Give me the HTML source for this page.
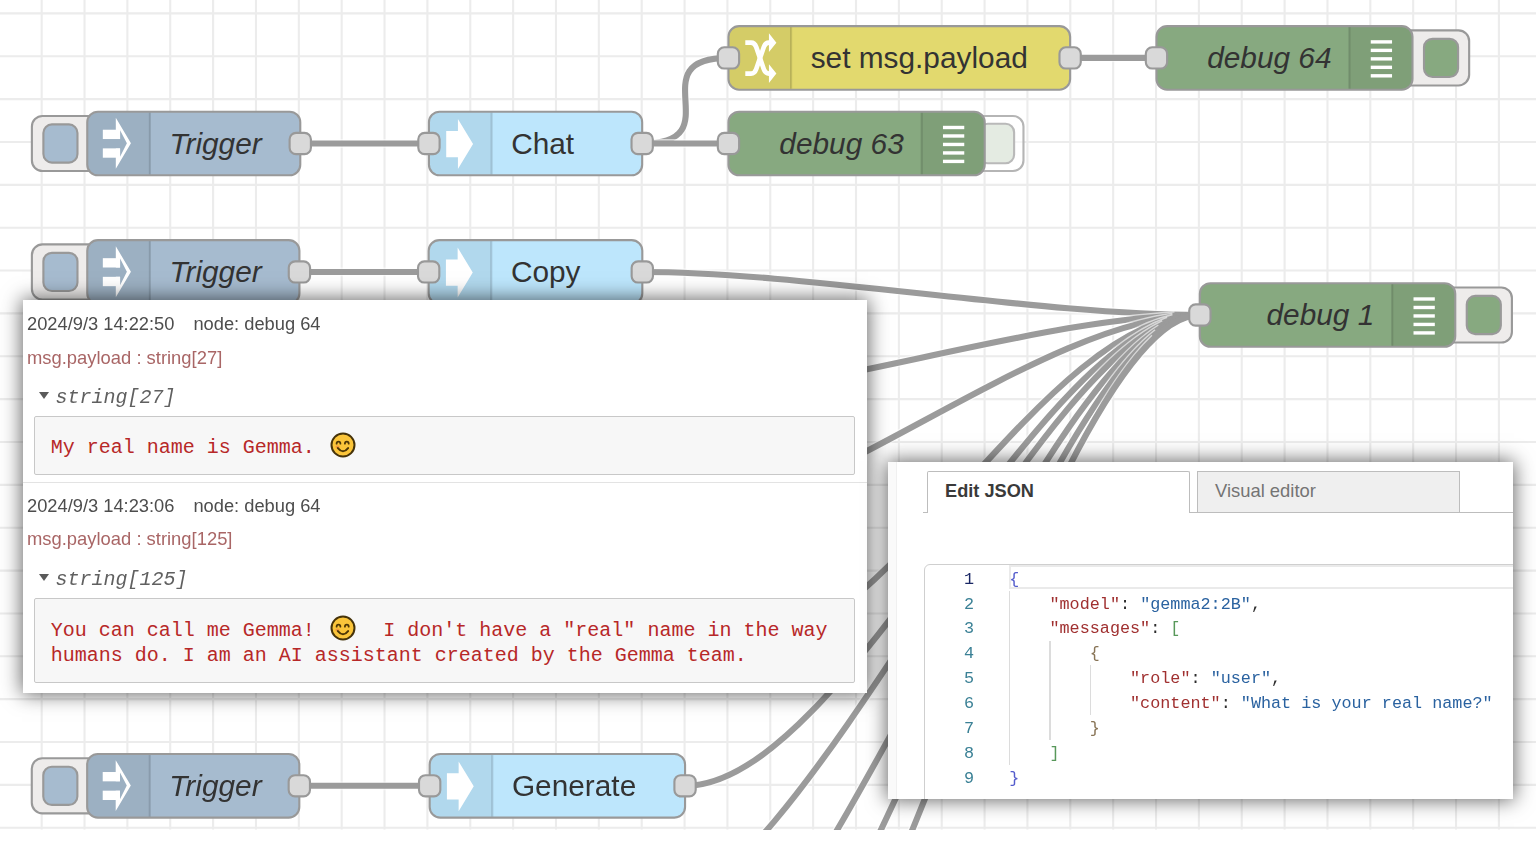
<!DOCTYPE html>
<html lang="en"><head><meta charset="utf-8"><title>Node-RED flow</title>
<style>
html,body{margin:0;padding:0;background:#fff}
body{width:1536px;height:864px;overflow:hidden;position:relative;font-family:"Liberation Sans",Arial,Helvetica,sans-serif}
.lo{stroke:#fff;stroke-width:8.8;stroke-opacity:.6;stroke-dasharray:95.5 4.5;stroke-linecap:butt}.ll{stroke:#9b9b9b;stroke-width:6.1}
.ws{position:absolute;left:0;top:0;display:block;filter:blur(.7px)}
.p1,.p2{filter:blur(.45px)}
.p1{position:absolute;left:23px;top:300px;width:844px;height:393px;background:#fff;box-shadow:0 0 19px 1px rgba(0,0,0,.62);overflow:hidden}
.m{position:absolute;left:0;width:100%;height:181px}
.meta{position:absolute;left:4px;top:13.1px;font-size:18.3px;line-height:22px;color:#4d4d4d;white-space:nowrap}
.nm{position:absolute;left:166.4px;top:0}
.tp{position:absolute;left:4px;top:46.5px;font-size:18.4px;line-height:22px;color:#a96666;white-space:nowrap}
.ty{position:absolute;left:32.6px;top:85.3px;font:italic 20px/26px "Liberation Mono","DejaVu Sans Mono",monospace;color:#606060;white-space:nowrap}
.tri{position:absolute;left:-16.6px;top:7.2px;width:0;height:0;border-left:5.7px solid transparent;border-right:5.7px solid transparent;border-top:7px solid #5a5a5a}
.box{position:absolute;left:10.5px;top:116px;width:821.2px;box-sizing:border-box;border:1.5px solid #c8c8c8;border-radius:2px;background:#f7f7f7;padding:19.2px 0 11.8px 16.2px;font:20px/25px "Liberation Mono","DejaVu Sans Mono",monospace;color:#b72828;white-space:pre}
.emo{display:inline-block;width:32.6px;height:10px;position:relative;vertical-align:baseline}
.emo svg{position:absolute;left:3.7px;top:-11.2px}
.sep{position:absolute;left:0;width:100%;height:1.5px;background:#e3e3e3}
.p2{position:absolute;left:888.4px;top:461.5px;width:624.7px;height:337px;background:#fff;box-shadow:0 0 19px 1px rgba(0,0,0,.62);overflow:hidden}
.edge{position:absolute;left:0;top:0;width:7.6px;height:100%;background:#fafafa;border-right:1.2px solid #f0f0f0}
.tabbar{position:absolute;left:35px;top:50px;width:600px;height:1.5px;background:#bdbdbd}
.tab{position:absolute;box-sizing:border-box;border:1.5px solid #bdbdbd;font-size:17.6px;line-height:38px;white-space:nowrap}
.t1{left:38.3px;top:9.8px;width:263.6px;height:41.7px;border-bottom:0;background:#fff;color:#3a3a3a;font-weight:bold;font-size:18.2px;padding-left:17.4px;border-radius:2px 2px 0 0}
.t2{left:309px;top:9.5px;width:262.5px;height:42px;background:#efefef;color:#747474;padding-left:16.6px;font-size:18.4px}
.ed{position:absolute;left:35.4px;top:102px;width:620px;height:260px;box-sizing:border-box;border:1.5px solid #cfcfcf;border-radius:6px 0 0 0;font:16.8px/24.85px "Liberation Mono","DejaVu Sans Mono",monospace;color:#2c2c2c;white-space:pre}
.cur{position:absolute;left:83.8px;top:0.6px;width:560px;height:24px;box-sizing:border-box;border:2px solid #eaeaea}
.ig{position:absolute;width:1.2px;background:#dcdcdc}
.ln{position:relative;height:24.85px}
.no{position:absolute;left:0;top:3.3px;width:49.3px;text-align:right;color:#3a8095}
.no.act{color:#1a2764}
.cd{position:absolute;left:84.4px;top:3.3px}
.k{color:#a03030}.s{color:#2a62a0}.b1{color:#545ccc}.b2{color:#58985a}.b3{color:#887456}
</style></head>
<body>
<svg class="ws" width="1536" height="829.5" viewBox="0 0 1536 829.5"><rect width="1536" height="829.5" fill="#fff"/><path d="M41.66 0V829.5M84.52 0V829.5M127.38 0V829.5M170.24 0V829.5M213.1 0V829.5M255.96 0V829.5M298.82 0V829.5M341.68 0V829.5M384.54 0V829.5M427.4 0V829.5M470.26 0V829.5M513.12 0V829.5M555.98 0V829.5M598.84 0V829.5M641.7 0V829.5M684.56 0V829.5M727.42 0V829.5M770.28 0V829.5M813.14 0V829.5M856 0V829.5M898.86 0V829.5M941.72 0V829.5M984.58 0V829.5M1027.44 0V829.5M1070.3 0V829.5M1113.16 0V829.5M1156.02 0V829.5M1198.88 0V829.5M1241.74 0V829.5M1284.6 0V829.5M1327.46 0V829.5M1370.32 0V829.5M1413.18 0V829.5M1456.04 0V829.5M1498.9 0V829.5M0 13.4H1536M0 56.26H1536M0 99.12H1536M0 141.98H1536M0 184.84H1536M0 227.7H1536M0 270.56H1536M0 313.42H1536M0 356.28H1536M0 399.14H1536M0 442H1536M0 484.86H1536M0 527.72H1536M0 570.58H1536M0 613.44H1536M0 656.3H1536M0 699.16H1536M0 742.02H1536M0 784.88H1536M0 827.74H1536" stroke="#ececec" stroke-width="2.1" fill="none"/><g fill="none" stroke-linecap="round"><path class="lo" pathLength="100" d="M300 143.5 C396.75 143.5 332.25 143.5 429 143.5"/><path class="ll" d="M300 143.5 C396.75 143.5 332.25 143.5 429 143.5"/><path class="lo" pathLength="100" d="M642.5 143.5 C733.45 143.5 637.45 57.9 728.4 57.9"/><path class="ll" d="M642.5 143.5 C733.45 143.5 637.45 57.9 728.4 57.9"/><path class="lo" pathLength="100" d="M642.5 143.5 C706.92 143.5 663.98 143.5 728.4 143.5"/><path class="ll" d="M642.5 143.5 C706.92 143.5 663.98 143.5 728.4 143.5"/><path class="lo" pathLength="100" d="M1070.5 57.9 C1135 57.9 1092 57.9 1156.5 57.9"/><path class="ll" d="M1070.5 57.9 C1135 57.9 1092 57.9 1156.5 57.9"/><path class="lo" pathLength="100" d="M300 271.96 C396.75 271.96 332.25 271.96 429 271.96"/><path class="ll" d="M300 271.96 C396.75 271.96 332.25 271.96 429 271.96"/><path class="lo" pathLength="100" d="M642.5 271.96 C802.25 271.96 1040.15 315 1199.9 315"/><path class="ll" d="M642.5 271.96 C802.25 271.96 1040.15 315 1199.9 315"/><path class="lo" pathLength="100" d="M643 400.42 C802.75 400.42 1040.15 315 1199.9 315"/><path class="ll" d="M643 400.42 C802.75 400.42 1040.15 315 1199.9 315"/><path class="lo" pathLength="100" d="M643 528.88 C802.75 528.88 1040.15 315 1199.9 315"/><path class="ll" d="M643 528.88 C802.75 528.88 1040.15 315 1199.9 315"/><path class="lo" pathLength="100" d="M728 657.34 C887.75 657.34 1040.15 315 1199.9 315"/><path class="ll" d="M728 657.34 C887.75 657.34 1040.15 315 1199.9 315"/><path class="lo" pathLength="100" d="M300 785.8 C397.12 785.8 332.38 785.8 429.5 785.8"/><path class="ll" d="M300 785.8 C397.12 785.8 332.38 785.8 429.5 785.8"/><path class="lo" pathLength="100" d="M685.5 785.8 C845.25 785.8 1040.15 315 1199.9 315"/><path class="ll" d="M685.5 785.8 C845.25 785.8 1040.15 315 1199.9 315"/><path class="lo" pathLength="100" d="M643 914.26 C802.75 914.26 1040.15 315 1199.9 315"/><path class="ll" d="M643 914.26 C802.75 914.26 1040.15 315 1199.9 315"/><path class="lo" pathLength="100" d="M643 1042.72 C802.75 1042.72 1040.15 315 1199.9 315"/><path class="ll" d="M643 1042.72 C802.75 1042.72 1040.15 315 1199.9 315"/><path class="lo" pathLength="100" d="M643 1171.18 C802.75 1171.18 1040.15 315 1199.9 315"/><path class="ll" d="M643 1171.18 C802.75 1171.18 1040.15 315 1199.9 315"/><path class="lo" pathLength="100" d="M643 1299.64 C802.75 1299.64 1040.15 315 1199.9 315"/><path class="ll" d="M643 1299.64 C802.75 1299.64 1040.15 315 1199.9 315"/></g><g font-family="'Liberation Sans', Arial, Helvetica, sans-serif" fill="#333" stroke-width="1"><g transform="translate(87.27 111.7) scale(2.13 2.12)"><rect x="-26" y="2" width="32.6" height="26" rx="5" fill="#eeeceb" stroke="#999"/><rect x="-20.6" y="6" width="16" height="18" rx="4" fill="#a6bbcf" stroke="#999"/><rect x="0" y="0" width="100" height="30" rx="5" fill="#a6bbcf" stroke="#999"/><path d="M29.4 0.5 H5 a4.5 4.5 0 0 0 -4.5 4.5 V25 a4.5 4.5 0 0 0 4.5 4.5 H29.4 Z" fill="#000" fill-opacity="0.06"/><path d="M29.4 0.5 V29.5" stroke="#000" stroke-opacity="0.13" stroke-width="1"/><g transform="translate(-0.4 0)"><rect x="7.7" y="8.5" width="8.1" height="4.4" fill="#fff"/><rect x="7.7" y="17.3" width="8.1" height="4.4" fill="#fff"/><path fill="#fff" fill-rule="evenodd" d="M13.8 2.9 L20.9 14.9 L13.8 26.9 Z M13.8 12.9 H15.8 V8.7 L19 14.9 L15.8 21.3 V17.3 H13.8 Z"/></g><text x="38.6" y="19.9" font-size="14" font-style="italic">Trigger</text><rect x="95" y="10" width="10" height="10" rx="3" fill="#d9d9d9" stroke="#999"/></g><g transform="translate(428.96 111.7) scale(2.13 2.12)"><rect x="0" y="0" width="100.1" height="30" rx="5" fill="#bde6fc" stroke="#999"/><path d="M29.4 0.5 H5 a4.5 4.5 0 0 0 -4.5 4.5 V25 a4.5 4.5 0 0 0 4.5 4.5 H29.4 Z" fill="#000" fill-opacity="0.06"/><path d="M29.4 0.5 V29.5" stroke="#000" stroke-opacity="0.13" stroke-width="1"/><g transform="translate(-0.4 0)"><path fill="#fff" d="M8.5 9.1 H14 V3.5 L21.1 15.2 L14 27 V21.5 H8.5 Z"/></g><text x="38.6" y="19.9" font-size="14">Chat</text><rect x="-5" y="10" width="10" height="10" rx="3" fill="#d9d9d9" stroke="#999"/><rect x="95.1" y="10" width="10" height="10" rx="3" fill="#d9d9d9" stroke="#999"/></g><g transform="translate(728.47 26.1) scale(2.13 2.12)"><rect x="0" y="0" width="160.4" height="30" rx="5" fill="#e2d96e" stroke="#999"/><path d="M29.4 0.5 H5 a4.5 4.5 0 0 0 -4.5 4.5 V25 a4.5 4.5 0 0 0 4.5 4.5 H29.4 Z" fill="#000" fill-opacity="0.06"/><path d="M29.4 0.5 V29.5" stroke="#000" stroke-opacity="0.13" stroke-width="1"/><g transform="translate(-0.4 0)"><path fill="none" stroke="#fff" stroke-width="2.2" d="M8.3 7.8 H11 Q12.7 7.8 13.4 9.8 L17 20.4 Q17.7 22.4 19.4 22.4 H20"/><path fill="none" stroke="#fff" stroke-width="2.2" d="M8.3 22.4 H11 Q12.7 22.4 13.4 20.4 L17 9.8 Q17.7 7.8 19.4 7.8 H20"/><path fill="#fff" d="M19.4 3.4 L22.9 7.8 L19.4 12.2 Z M19.4 18 L22.9 22.4 L19.4 26.8 Z"/></g><text x="38.6" y="19.9" font-size="14">set msg.payload</text><rect x="-5" y="10" width="10" height="10" rx="3" fill="#d9d9d9" stroke="#999"/><rect x="155.4" y="10" width="10" height="10" rx="3" fill="#d9d9d9" stroke="#999"/></g><g transform="translate(728.47 111.7) scale(2.13 2.12)"><rect x="105.3" y="2" width="33.2" height="26" rx="5" fill="#fff" fill-opacity="0.55" stroke="#b5b5b5"/><rect x="117.7" y="5.7" width="16.4" height="18.6" rx="4" fill="#e4ebe2" stroke="#b9b9b9"/><rect x="0" y="0" width="120.3" height="30" rx="5" fill="#87a980" stroke="#999"/><path d="M90.7 0.5 H115.3 a4.5 4.5 0 0 1 4.5 4.5 V25 a4.5 4.5 0 0 1 -4.5 4.5 H90.7 Z" fill="#000" fill-opacity="0.06"/><path d="M90.7 0.5 V29.5" stroke="#000" stroke-opacity="0.13" stroke-width="1"/><rect x="100.7" y="6.65" width="10" height="1.6" fill="#fff"/><rect x="100.7" y="10.65" width="10" height="1.6" fill="#fff"/><rect x="100.7" y="14.65" width="10" height="1.6" fill="#fff"/><rect x="100.7" y="18.65" width="10" height="1.6" fill="#fff"/><rect x="100.7" y="22.65" width="10" height="1.6" fill="#fff"/><text x="82.3" y="19.9" text-anchor="end" font-size="14" font-style="italic">debug 63</text><rect x="-5" y="10" width="10" height="10" rx="3" fill="#d9d9d9" stroke="#999"/></g><g transform="translate(1156.47 26.1) scale(2.13 2.12)"><rect x="113.2" y="2" width="33.6" height="26" rx="5" fill="#eeeceb" stroke="#999"/><rect x="125.6" y="6" width="16" height="18" rx="4" fill="#87a980" stroke="#999"/><rect x="0" y="0" width="120.2" height="30" rx="5" fill="#87a980" stroke="#999"/><path d="M90.6 0.5 H115.2 a4.5 4.5 0 0 1 4.5 4.5 V25 a4.5 4.5 0 0 1 -4.5 4.5 H90.6 Z" fill="#000" fill-opacity="0.06"/><path d="M90.6 0.5 V29.5" stroke="#000" stroke-opacity="0.13" stroke-width="1"/><rect x="100.6" y="6.65" width="10" height="1.6" fill="#fff"/><rect x="100.6" y="10.65" width="10" height="1.6" fill="#fff"/><rect x="100.6" y="14.65" width="10" height="1.6" fill="#fff"/><rect x="100.6" y="18.65" width="10" height="1.6" fill="#fff"/><rect x="100.6" y="22.65" width="10" height="1.6" fill="#fff"/><text x="82.2" y="19.9" text-anchor="end" font-size="14" font-style="italic">debug 64</text><rect x="-5" y="10" width="10" height="10" rx="3" fill="#d9d9d9" stroke="#999"/></g><g transform="translate(87.27 240.16) scale(2.13 2.12)"><rect x="-26" y="2" width="32.6" height="26" rx="5" fill="#eeeceb" stroke="#999"/><rect x="-20.6" y="6" width="16" height="18" rx="4" fill="#a6bbcf" stroke="#999"/><rect x="0" y="0" width="99.6" height="30" rx="5" fill="#a6bbcf" stroke="#999"/><path d="M29.4 0.5 H5 a4.5 4.5 0 0 0 -4.5 4.5 V25 a4.5 4.5 0 0 0 4.5 4.5 H29.4 Z" fill="#000" fill-opacity="0.06"/><path d="M29.4 0.5 V29.5" stroke="#000" stroke-opacity="0.13" stroke-width="1"/><g transform="translate(-0.4 0)"><rect x="7.7" y="8.5" width="8.1" height="4.4" fill="#fff"/><rect x="7.7" y="17.3" width="8.1" height="4.4" fill="#fff"/><path fill="#fff" fill-rule="evenodd" d="M13.8 2.9 L20.9 14.9 L13.8 26.9 Z M13.8 12.9 H15.8 V8.7 L19 14.9 L15.8 21.3 V17.3 H13.8 Z"/></g><text x="38.6" y="19.9" font-size="14" font-style="italic">Trigger</text><rect x="94.6" y="10" width="10" height="10" rx="3" fill="#d9d9d9" stroke="#999"/></g><g transform="translate(428.67 240.16) scale(2.13 2.12)"><rect x="0" y="0" width="100.3" height="30" rx="5" fill="#bde6fc" stroke="#999"/><path d="M29.4 0.5 H5 a4.5 4.5 0 0 0 -4.5 4.5 V25 a4.5 4.5 0 0 0 4.5 4.5 H29.4 Z" fill="#000" fill-opacity="0.06"/><path d="M29.4 0.5 V29.5" stroke="#000" stroke-opacity="0.13" stroke-width="1"/><g transform="translate(-0.4 0)"><path fill="#fff" d="M8.5 9.1 H14 V3.5 L21.1 15.2 L14 27 V21.5 H8.5 Z"/></g><text x="38.6" y="19.9" font-size="14">Copy</text><rect x="-5" y="10" width="10" height="10" rx="3" fill="#d9d9d9" stroke="#999"/><rect x="95.3" y="10" width="10" height="10" rx="3" fill="#d9d9d9" stroke="#999"/></g><g transform="translate(1199.87 283.2) scale(2.13 2.12)"><rect x="112.9" y="2" width="33.6" height="26" rx="5" fill="#eeeceb" stroke="#999"/><rect x="125.3" y="6" width="16" height="18" rx="4" fill="#87a980" stroke="#999"/><rect x="0" y="0" width="119.9" height="30" rx="5" fill="#87a980" stroke="#999"/><path d="M90.3 0.5 H114.9 a4.5 4.5 0 0 1 4.5 4.5 V25 a4.5 4.5 0 0 1 -4.5 4.5 H90.3 Z" fill="#000" fill-opacity="0.06"/><path d="M90.3 0.5 V29.5" stroke="#000" stroke-opacity="0.13" stroke-width="1"/><rect x="100.3" y="6.65" width="10" height="1.6" fill="#fff"/><rect x="100.3" y="10.65" width="10" height="1.6" fill="#fff"/><rect x="100.3" y="14.65" width="10" height="1.6" fill="#fff"/><rect x="100.3" y="18.65" width="10" height="1.6" fill="#fff"/><rect x="100.3" y="22.65" width="10" height="1.6" fill="#fff"/><text x="81.9" y="19.9" text-anchor="end" font-size="14" font-style="italic">debug 1</text><rect x="-5" y="10" width="10" height="10" rx="3" fill="#d9d9d9" stroke="#999"/></g><g transform="translate(87.16 754) scale(2.13 2.12)"><rect x="-26" y="2" width="32.6" height="26" rx="5" fill="#eeeceb" stroke="#999"/><rect x="-20.6" y="6" width="16" height="18" rx="4" fill="#a6bbcf" stroke="#999"/><rect x="0" y="0" width="99.6" height="30" rx="5" fill="#a6bbcf" stroke="#999"/><path d="M29.4 0.5 H5 a4.5 4.5 0 0 0 -4.5 4.5 V25 a4.5 4.5 0 0 0 4.5 4.5 H29.4 Z" fill="#000" fill-opacity="0.06"/><path d="M29.4 0.5 V29.5" stroke="#000" stroke-opacity="0.13" stroke-width="1"/><g transform="translate(-0.4 0)"><rect x="7.7" y="8.5" width="8.1" height="4.4" fill="#fff"/><rect x="7.7" y="17.3" width="8.1" height="4.4" fill="#fff"/><path fill="#fff" fill-rule="evenodd" d="M13.8 2.9 L20.9 14.9 L13.8 26.9 Z M13.8 12.9 H15.8 V8.7 L19 14.9 L15.8 21.3 V17.3 H13.8 Z"/></g><text x="38.6" y="19.9" font-size="14" font-style="italic">Trigger</text><rect x="94.6" y="10" width="10" height="10" rx="3" fill="#d9d9d9" stroke="#999"/></g><g transform="translate(429.67 754) scale(2.13 2.12)"><rect x="0" y="0" width="119.9" height="30" rx="5" fill="#bde6fc" stroke="#999"/><path d="M29.4 0.5 H5 a4.5 4.5 0 0 0 -4.5 4.5 V25 a4.5 4.5 0 0 0 4.5 4.5 H29.4 Z" fill="#000" fill-opacity="0.06"/><path d="M29.4 0.5 V29.5" stroke="#000" stroke-opacity="0.13" stroke-width="1"/><g transform="translate(-0.4 0)"><path fill="#fff" d="M8.5 9.1 H14 V3.5 L21.1 15.2 L14 27 V21.5 H8.5 Z"/></g><text x="38.6" y="19.9" font-size="14">Generate</text><rect x="-5" y="10" width="10" height="10" rx="3" fill="#d9d9d9" stroke="#999"/><rect x="114.9" y="10" width="10" height="10" rx="3" fill="#d9d9d9" stroke="#999"/></g></g></svg>
<div class="p1"><div class="m" style="top:0px"><div class="meta"><span class="dt">2024/9/3 14:22:50</span><span class="nm">node: debug 64</span></div><div class="tp">msg.payload : string[27]</div><div class="ty"><i class="tri"></i>string[27]</div><div class="box" style="padding-top:18.2px;padding-bottom:13.8px">My real name is Gemma. <span class="emo" role="img" aria-label="😊"><svg width="26" height="26" viewBox="0 0 26 26"><circle cx="13" cy="13" r="11.5" fill="#fbc53a" stroke="#46330a" stroke-width="2"/><ellipse cx="7.5" cy="15" rx="2.1" ry="1.4" fill="#f39a3c"/><path d="M6.6 11.7 a1.9 2.1 0 0 1 3.8 0 M14.9 11.7 a1.9 2.1 0 0 1 3.8 0" fill="none" stroke="#4e3706" stroke-width="1.8" stroke-linecap="round"/><path d="M7.9 16.1 Q13 22.6 18.1 16.1" fill="none" stroke="#4e3706" stroke-width="2" stroke-linecap="round"/></svg></span></div></div><div class="sep" style="top:181.5px"></div><div class="m" style="top:181.7px"><div class="meta"><span class="dt">2024/9/3 14:23:06</span><span class="nm">node: debug 64</span></div><div class="tp">msg.payload : string[125]</div><div class="ty"><i class="tri"></i>string[125]</div><div class="box" style="padding-bottom:14px">You can call me Gemma! <span class="emo" role="img" aria-label="😊"><svg width="26" height="26" viewBox="0 0 26 26"><circle cx="13" cy="13" r="11.5" fill="#fbc53a" stroke="#46330a" stroke-width="2"/><ellipse cx="7.5" cy="15" rx="2.1" ry="1.4" fill="#f39a3c"/><path d="M6.6 11.7 a1.9 2.1 0 0 1 3.8 0 M14.9 11.7 a1.9 2.1 0 0 1 3.8 0" fill="none" stroke="#4e3706" stroke-width="1.8" stroke-linecap="round"/><path d="M7.9 16.1 Q13 22.6 18.1 16.1" fill="none" stroke="#4e3706" stroke-width="2" stroke-linecap="round"/></svg></span>  I don't have a "real" name in the way
humans do. I am an AI assistant created by the Gemma team.</div></div></div>
<div class="p2"><div class="edge"></div><div class="tabbar"></div><div class="tab t1">Edit JSON</div><div class="tab t2">Visual editor</div><div class="ed"><div class="cur"></div><i class="ig" style="left:84.2px;top:26.3px;height:174px"></i><i class="ig" style="left:124.6px;top:76px;height:99.4px"></i><i class="ig" style="left:165px;top:100.9px;height:49.7px"></i><div class="ln"><span class="no act">1</span><span class="cd"><span class="b1">{</span></span></div><div class="ln"><span class="no">2</span><span class="cd">    <span class="k">&quot;model&quot;</span>: <span class="s">&quot;gemma2:2B&quot;</span>,</span></div><div class="ln"><span class="no">3</span><span class="cd">    <span class="k">&quot;messages&quot;</span>: <span class="b2">[</span></span></div><div class="ln"><span class="no">4</span><span class="cd">        <span class="b3">{</span></span></div><div class="ln"><span class="no">5</span><span class="cd">            <span class="k">&quot;role&quot;</span>: <span class="s">&quot;user&quot;</span>,</span></div><div class="ln"><span class="no">6</span><span class="cd">            <span class="k">&quot;content&quot;</span>: <span class="s">&quot;What is your real name?&quot;</span></span></div><div class="ln"><span class="no">7</span><span class="cd">        <span class="b3">}</span></span></div><div class="ln"><span class="no">8</span><span class="cd">    <span class="b2">]</span></span></div><div class="ln"><span class="no">9</span><span class="cd"><span class="b1">}</span></span></div></div></div>
</body></html>
